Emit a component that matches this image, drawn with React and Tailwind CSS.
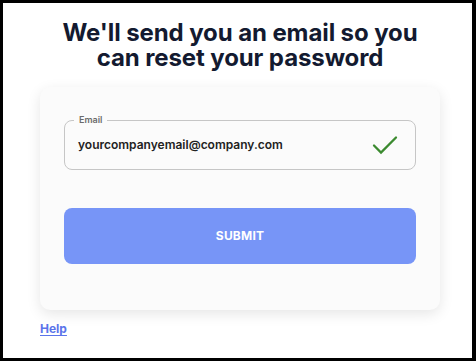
import React from "react";

export default function App() {
  return (
    <div
      className="w-[476px] h-[361px] bg-white border-black border-l-[3px] border-t-[3px] border-r-[4px] border-b-[3px] overflow-hidden"
      style={{ fontFamily: "Inter, 'Noto Sans', sans-serif" }}
    >
      <div className="pl-[37px] pr-[32px] pt-[17px]">
        <h1 className="text-center text-[24px] leading-[25px] font-bold text-[#131a30] tracking-[-0.1px]">
          We'll send you an email so you
          <br />
          can reset your password
        </h1>
        <div className="mt-[17px] rounded-[10px] bg-[#fbfbfb] shadow-[0_4px_14px_rgba(0,0,0,0.10)] px-[24px] pt-[33px] pb-[46px]">
          <div className="relative h-[50px] rounded-[8px] border border-[#c6c6c6] flex items-center pl-[13px] pr-[17px]">
            <span className="absolute left-[9px] -top-[7px] px-[5px] bg-[#fbfbfb] text-[9px] leading-[12px] font-semibold text-[#6b6b6b]">
              Email
            </span>
            <span className="flex-1 text-[12px] font-semibold text-[#222222] -mt-[1px]">
              yourcompanyemail@company.com
            </span>
            <svg width="26" height="20" viewBox="0 0 26 20" className="-mt-[1px]">
              <path d="M2 10.5 L9 17.5 L24 2.5" fill="none" stroke="#3b8a2f" strokeWidth="2.3" strokeLinecap="round" strokeLinejoin="miter" />
            </svg>
          </div>
          <button className="mt-[38px] w-full h-[56px] rounded-[8px] bg-[#7795f7] text-white text-[12px] font-bold tracking-[0.2px]">
            SUBMIT
          </button>
        </div>
        <div className="mt-[5px]">
          <a className="text-[12px] font-bold text-[#5b74ea] underline underline-offset-2">Help</a>
        </div>
      </div>
    </div>
  );
}
